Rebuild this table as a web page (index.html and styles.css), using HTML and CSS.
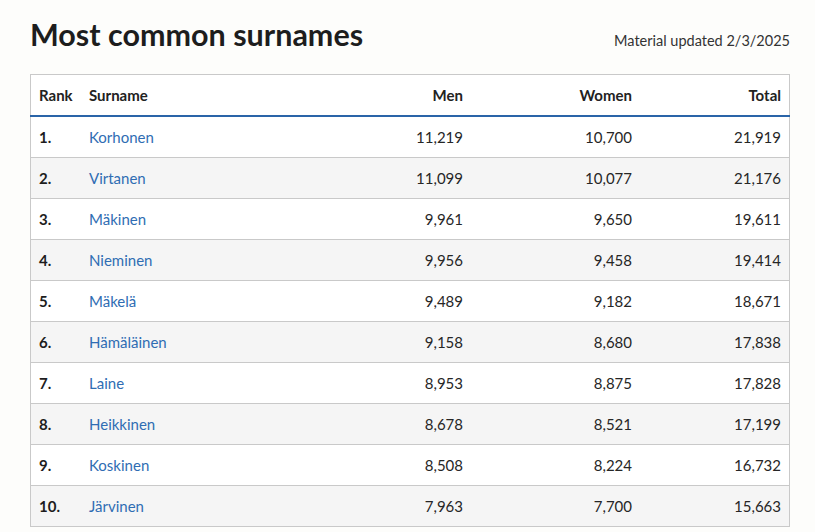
FILE: index.html
```html
<!DOCTYPE html>
<html lang="en">
<head>
<meta charset="utf-8">
<title>Most common surnames</title>
<link rel="stylesheet" href="styles.css">
</head>
<body>
<main class="page">
  <header class="head">
    <h1 class="title">Most common surnames</h1>
    <p class="updated">Material updated 2/3/2025</p>
  </header>
  <table class="names">
    <thead>
      <tr><th class="c-rank">Rank</th><th class="c-name">Surname</th><th class="num c-men">Men</th><th class="num c-women">Women</th><th class="num c-total">Total</th></tr>
    </thead>
    <tbody>
      <tr><td class="rank">1.</td><td><a href="#">Korhonen</a></td><td class="num">11,219</td><td class="num">10,700</td><td class="num">21,919</td></tr>
      <tr><td class="rank">2.</td><td><a href="#">Virtanen</a></td><td class="num">11,099</td><td class="num">10,077</td><td class="num">21,176</td></tr>
      <tr><td class="rank">3.</td><td><a href="#">Mäkinen</a></td><td class="num">9,961</td><td class="num">9,650</td><td class="num">19,611</td></tr>
      <tr><td class="rank">4.</td><td><a href="#">Nieminen</a></td><td class="num">9,956</td><td class="num">9,458</td><td class="num">19,414</td></tr>
      <tr><td class="rank">5.</td><td><a href="#">Mäkelä</a></td><td class="num">9,489</td><td class="num">9,182</td><td class="num">18,671</td></tr>
      <tr><td class="rank">6.</td><td><a href="#">Hämäläinen</a></td><td class="num">9,158</td><td class="num">8,680</td><td class="num">17,838</td></tr>
      <tr><td class="rank">7.</td><td><a href="#">Laine</a></td><td class="num">8,953</td><td class="num">8,875</td><td class="num">17,828</td></tr>
      <tr><td class="rank">8.</td><td><a href="#">Heikkinen</a></td><td class="num">8,678</td><td class="num">8,521</td><td class="num">17,199</td></tr>
      <tr><td class="rank">9.</td><td><a href="#">Koskinen</a></td><td class="num">8,508</td><td class="num">8,224</td><td class="num">16,732</td></tr>
      <tr><td class="rank">10.</td><td><a href="#">Järvinen</a></td><td class="num">7,963</td><td class="num">7,700</td><td class="num">15,663</td></tr>
    </tbody>
  </table>
</main>
</body>
</html>
```
FILE: styles.css
```css
html, body {
  margin: 0;
  padding: 0;
  background: #fdfdfb;
  color: #222;
  font-family: "Lato", "Liberation Sans", sans-serif;
}
.page {
  padding: 14px 25px 0 30px;
}
.head {
  display: flex;
  justify-content: space-between;
  align-items: flex-start;
  height: 60px;
}
.title {
  margin: 0;
  font-size: 30.5px;
  font-weight: 700;
  line-height: 40px;
  color: #1d1d1d;
}
.updated {
  margin: 18px 0 0 0;
  font-size: 14.5px;
  line-height: 18px;
  color: #333;
}
.names {
  width: 760px;
  border-collapse: collapse;
  border: 1px solid #c9c9c9;
  background: #fff;
  font-size: 15px;
}
.names th {
  font-weight: 700;
  text-align: left;
  height: 40px;
  padding: 0 8px;
  border-bottom: 2px solid #2a64a8;
  color: #222;
}
.names td {
  height: 40px;
  padding: 0 8px;
  border-top: 1px solid #c9c9c9;
  color: #262626;
}
.names tbody tr:nth-child(even) {
  background: #f5f5f5;
}
.names .num {
  text-align: right;
}
.names .rank {
  font-weight: 700;
  color: #1d1d1d;
}
.c-rank { width: 34px; }
.c-men { width: 170px; }
.c-women { width: 153px; }
.c-total { width: 133px; }
.names a {
  color: #2f6db3;
  text-decoration: none;
}
```
